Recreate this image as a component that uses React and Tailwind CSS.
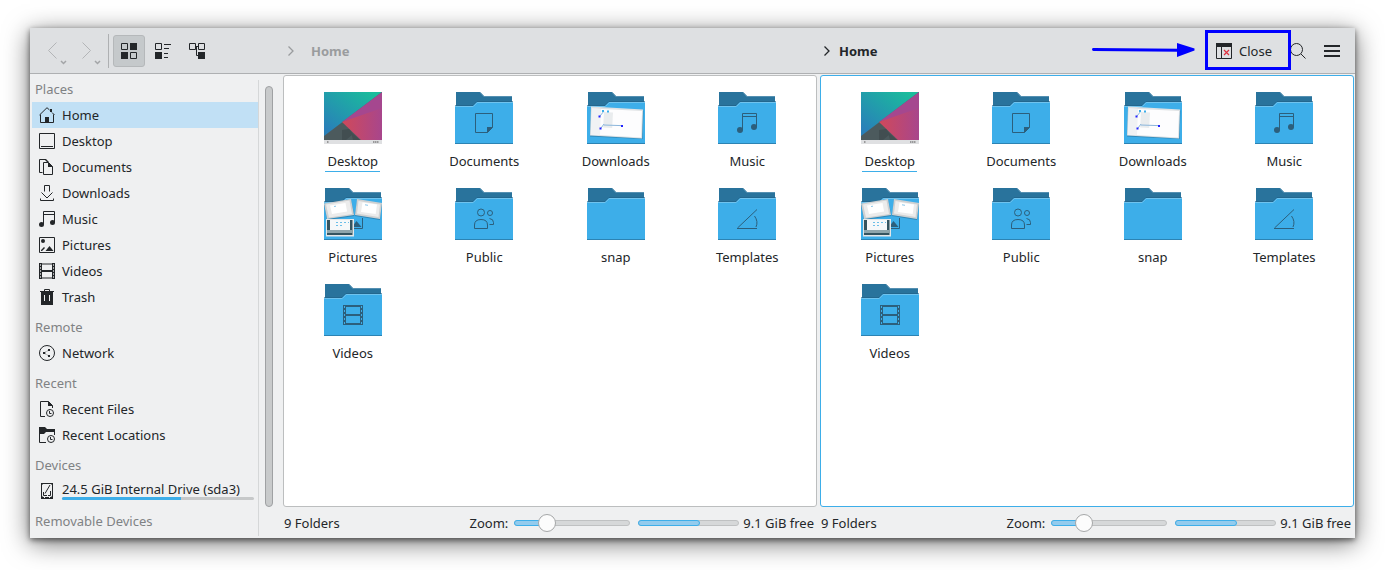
import React, { useState } from "react";

const svg16 = { width: 16, height: 16, viewBox: "0 0 16 16", fill: "none", stroke: "currentColor", "aria-hidden": true, className: "shrink-0" };

const icons = {
    home: (
        <svg {...svg16}>
            <path d="M0.5 8 8 0.7l2.5 2.3M13 5.5 15.5 8M1.5 7.5v8h13v-8" />
            <path d="M11 2h2v3h-2zM6 10h4v6H6z" fill="currentColor" stroke="none" />
        </svg>
    ),
    desktop: (
        <svg {...svg16}>
            <path d="M0.5 0.5h15v15H0.5zM2 13.5h12" />
        </svg>
    ),
    documents: (
        <svg {...svg16}>
            <path d="M3.5 13.5h-3V0.5h6M4.5 3.5h5l4 4v8h-9z" />
            <path d="M5 0h2l3 3H8zM9 3l5 5H9z" fill="currentColor" stroke="none" />
        </svg>
    ),
    downloads: (
        <svg {...svg16}>
            <path d="M5.5 6.5v-6h5v6M2.5 7.5 8 13l5.5-5.5M1.5 13.5v2h13v-2" />
        </svg>
    ),
    music: (
        <svg {...svg16}>
            <path d="M4.5 13V0.5h11V11.5M4.5 3.5h11" />
            <circle cx="2.5" cy="13.5" r="2.5" fill="currentColor" stroke="none" />
            <circle cx="13.5" cy="11.5" r="2.5" fill="currentColor" stroke="none" />
        </svg>
    ),
    pictures: (
        <svg {...svg16}>
            <path d="M0.5 0.5h15v15H0.5z" />
            <circle cx="4" cy="4" r="2" fill="currentColor" stroke="none" />
            <path d="M6.5 14l4-5 4 5zM2 14v-1l3-3 1 1-3 3z" fill="currentColor" stroke="none" />
        </svg>
    ),
    videos: (
        <svg {...svg16}>
            <path d="M0 1h16M0 15h16" strokeWidth="2" opacity="0.5" />
            <path d="M3 8h10" strokeWidth="2" />
            <path d="M0 0h3v16H0zM13 0h3v16h-3z" fill="currentColor" stroke="none" />
            <path d="M1.5 1v14M14.5 1v14" stroke="#a9abac" strokeDasharray="2 1" />
        </svg>
    ),
    trash: (
        <svg {...svg16}>
            <path d="M1 2.5h14M5.5 2V0.5h5V2" />
            <path d="M2 3h12v13H2zM5 6v6h1V6zM10 6v6h1V6z" fill="currentColor" stroke="none" fillRule="evenodd" />
        </svg>
    ),
    network: (
        <svg {...svg16}>
            <circle cx="8" cy="8" r="7.5" />
            <path d="M4 7h2v2H4zM9 4h2v2H9zM9 10h2v2H9z" fill="currentColor" stroke="none" />
            <path d="M6 7.5 9 5.5M6 8.5 9 10.5" strokeDasharray="1 1" opacity="0.7" />
        </svg>
    ),
    recentFiles: (
        <svg {...svg16}>
            <path d="M6 15.5H1.5V0.5h8l4 4V7" />
            <path d="M9 0l5 5H9z" fill="currentColor" stroke="none" />
            <circle cx="11" cy="12" r="3.5" />
            <path d="M10.5 10v2.5h2" />
        </svg>
    ),
    recentLocations: (
        <svg {...svg16}>
            <path d="M7 15.5H0.5V3M15.5 4v4" />
            <path d="M0 0h6l2 2h8v3H7L5 7H0z" fill="currentColor" stroke="none" />
            <circle cx="12" cy="12" r="3.5" />
            <path d="M11.5 10v2.5h2" />
        </svg>
    ),
    drive: (
        <svg {...svg16}>
            <path d="M2 0h12v16H2zM4 1 3 2v11l1 1h8l1-1V2l-1-1z" fill="currentColor" stroke="none" fillRule="evenodd" />
            <path d="M11 2 6 10.5M4.5 9v3.5H8M11.5 8v4.5H9" />
            <path d="M5 14.5h1M10 14.5h1" stroke="#eff0f1" />
        </svg>
    ),
};

const sections = [
    {
        title: "Places",
        items: [
            { name: "Home", icon: icons.home, active: true },
            { name: "Desktop", icon: icons.desktop },
            { name: "Documents", icon: icons.documents },
            { name: "Downloads", icon: icons.downloads },
            { name: "Music", icon: icons.music },
            { name: "Pictures", icon: icons.pictures },
            { name: "Videos", icon: icons.videos },
            { name: "Trash", icon: icons.trash },
        ],
    },
    { title: "Remote", items: [{ name: "Network", icon: icons.network }] },
    {
        title: "Recent",
        items: [
            { name: "Recent Files", icon: icons.recentFiles },
            { name: "Recent Locations", icon: icons.recentLocations },
        ],
    },
    { title: "Devices", items: [{ name: "24.5 GiB Internal Drive (sda3)", icon: icons.drive, used: 62 }] },
    { title: "Removable Devices", items: [] },
];

// drawn on top of the plain folder, in its 58x52 box
const glyphs = {
    documents: (
        <g>
            <path d="M20.5 21.5h17v14l-5 5h-12z" />
            <path d="M32 41v-6h6z" fill="#2c5f7c" stroke="none" />
        </g>
    ),
    downloads: (
        <g stroke="none">
            <path d="M4 15.5 56.5 18.5 55.5 47 3 44.5z" fill="#1f5f85" opacity="0.5" />
            <path d="M4 14.5 56 17.5 55 46.5 3 43.5z" fill="#dfe2e4" />
            <path d="M5 16.5 55 19 54 45.5 4 42.5z" fill="#fdfdfe" />
            <path d="M5 16.5 14 17l-1 26-9-.5z" fill="#f0f2f4" />
            <path d="M17 20l9 .5-.8 15.5-9-.5z" fill="#e9ecee" />
            <path d="M13 24l4-5M14 36l3-4M17 33l17 .6" stroke="#8bb6dc" />
            <path d="M15 18h2v2h-2zM20 18.5h2v2h-2z" fill="#3daee9" />
            <path d="M11.5 23.5h2v2h-2zM12.500 35.5h2v2h-2zM34 33h2v2h-2z" fill="#2222ff" />
        </g>
    ),
    music: (
        <g>
            <path d="M24.5 38V21.5h14V35M24.5 24.5h14" />
            <circle cx="22" cy="38" r="3" fill="#2c5f7c" stroke="none" />
            <circle cx="36" cy="35" r="3" fill="#2c5f7c" stroke="none" />
        </g>
    ),
    pictures: (
        <g>
            <path d="M29 40.5h9.5V30" />
            <path d="M28 39l4.5-6 5 6z" fill="#2c5f7c" stroke="none" />
            <g stroke="none">
                <path d="M0 17 27 12l3.5 16L3 32z" fill="#1f5f85" opacity="0.5" />
                <path d="M0 15.5 27 11l3 16L3 31z" fill="#cfd1d2" />
                <path d="M2 16.500l23.5-4 2.5 13.500L5 29.5z" fill="#ececec" />
                <path d="M6 17.5l15.5-2.5 1.6 8.5L8 26z" fill="#fff" />
                <path d="M33 12l25 4-2 16-25-4z" fill="#1f5f85" opacity="0.5" />
                <path d="M33 11l25 4-2 16-25-4z" fill="#cfd1d2" />
                <path d="M34.5 13 56 16.5 54.5 29 33 25.5z" fill="#ececec" />
                <path d="M38.5 14.5l14.5 2-1.3 9.5L37 24z" fill="#fff" />
                <path d="M10 18.5l2-.3M41 16.8l3 .5" stroke="#8cc8ea" />
                <path d="M2 31h28v17.5H2z" fill="#e4e7e8" />
                <path d="M3 32h25.5v15H3z" fill="#35545f" />
                <path d="M3 42h25.5v3H3z" fill="#8fa6ac" />
                <path d="M6 32h20v10H6z" fill="#f6f8f9" />
                <path d="M12 34.5h13M12 37.5h8" stroke="#6dbfe8" strokeDasharray="2 2" />
            </g>
        </g>
    ),
    public: (
        <g>
            <circle cx="26" cy="24.5" r="3.5" />
            <circle cx="35" cy="25" r="2.5" />
            <path d="M19.5 40.5V37q0-5.5 6.5-5.5T32.5 37v3.5zM34.5 30.5q4 .5 4 4v2h-4" />
        </g>
    ),
    snap: null,
    templates: (
        <g>
            <path d="M19 40.5h20M19.5 40 39 21.5M36.5 28q4 5.5 1.5 11" />
        </g>
    ),
    videos: (
        <g>
            <path d="M20.5 21v20M37.5 21v20" strokeWidth="3" />
            <path d="M20.5 22v18M37.5 22v18" stroke="#3daee9" strokeDasharray="2 2" />
            <path d="M22 22h14M22 31h14M22 40h14" strokeWidth="2" />
        </g>
    ),
};

function FolderIcon({ glyph }) {
    return (
        <svg width="58" height="52" viewBox="0 0 58 52" fill="none" stroke="#2c5f7c" aria-hidden="true">
            <path d="M1 0h24l4 4h28v12H1z" fill="#29739c" stroke="none" />
            <path d="M25.2 0.5 28.7 4.5H57" stroke="#5590b2" />
            <path d="M0 13.5h18l4-4h36" stroke="#1f5f85" opacity="0.6" />
            <path d="M0 14h18l4-4h36v42H0z" fill="#3daee9" stroke="none" />
            <path d="M0 14.5h18.3l4-4H58" stroke="#6fc3ee" />
            <path d="M0 51.5h58" stroke="#2c83b3" />
            {glyphs[glyph]}
        </svg>
    );
}

function DesktopPreview() {
    return (
        <svg width="58" height="52" viewBox="0 0 58 52" aria-hidden="true">
            <defs>
                <linearGradient id="teal" x1="0" y1="1" x2="1" y2="0">
                    <stop offset="0.1" stopColor="#2980b9" />
                    <stop offset="0.9" stopColor="#1abc9c" />
                </linearGradient>
                <linearGradient id="rose">
                    <stop offset="0" stopColor="#d0495a" />
                    <stop offset="1" stopColor="#a8468c" />
                </linearGradient>
            </defs>
            <path d="M0 0h58v52H0z" fill="#4c5a5d" />
            <path d="M0 0h58L0 44z" fill="url(#teal)" />
            <path d="M58 0v20L18 30z" fill="#a5478f" />
            <path d="M18 30 58 16v33H38z" fill="url(#rose)" />
            <path d="M18 38l7-1 4 5-7 6h-4zM27 40l9 8h-7z" fill="#424e51" />
            <path d="M0 48h58v4H0z" fill="#dfe0e2" />
            <path d="M3 50h2M49 50h6" stroke="#555" strokeDasharray="1.5 .5" />
        </svg>
    );
}

const files = [
    { name: "Desktop", icon: "desktop" },
    { name: "Documents", icon: "documents" },
    { name: "Downloads", icon: "downloads" },
    { name: "Music", icon: "music" },
    { name: "Pictures", icon: "pictures" },
    { name: "Public", icon: "public" },
    { name: "snap", icon: "snap" },
    { name: "Templates", icon: "templates" },
    { name: "Videos", icon: "videos" },
];

function Sidebar() {
    return (
        <aside className="flex w-[253px] shrink-0">
            <nav className="w-[228px] pl-0.5 pb-1">
                {sections.map((section, index) => (
                    <div key={section.title}>
                        <h2 className={`flex items-center pl-[3px] text-[#7f8284] ${index === 0 ? "h-7 pt-0.5" : "h-[30px] pt-1"}`}>
                            {section.title}
                        </h2>
                        {section.items.map((item) => (
                            <a
                                key={item.name}
                                href="#"
                                className={`flex h-[26px] items-center gap-[7px] pl-[7px] pr-1 ${item.active ? "bg-[#c1e0f5]" : ""}`}
                            >
                                {item.icon}
                                {item.used ? (
                                    <span className="flex-1 pb-0.5">
                                        <span className="block h-[17px] leading-[18px] whitespace-nowrap">{item.name}</span>
                                        <span className="block h-[3px] rounded-sm bg-[#c6c8c9]">
                                            <span className="block h-full rounded-l-sm bg-[#3daee9]" style={{ width: `${item.used}%` }} />
                                        </span>
                                    </span>
                                ) : (
                                    <span>{item.name}</span>
                                )}
                            </a>
                        ))}
                    </div>
                ))}
            </nav>
            <div className="mt-1.5 mb-0.5 w-px bg-[#d5d7d8]" />
            {/* Scrollbar */}
            <div className="ml-1.5 mt-3 mb-[31px] w-2 rounded-full border border-[#9fa1a3] bg-[#c8cacb]" />
        </aside>
    );
}

function Pane({ id, focused }) {
    const [zoom, setZoom] = useState(24);

    return (
        <section className="flex min-w-0 flex-1 flex-col">
            <div className={`flex-1 rounded-[3px] border bg-white px-[3px] pt-4 ${focused ? "border-[#3daee9]" : "border-[#bcbebf]"}`}>
                <div className="grid grid-cols-4">
                    {files.map((file) => (
                        <div key={file.name} className="flex h-24 flex-col items-center gap-2">
                            {file.icon === "desktop" ? <DesktopPreview /> : <FolderIcon glyph={file.icon} />}
                            <span className={`h-5 px-0.5 ${file.icon === "desktop" ? "border-b border-[#3daee9]" : ""}`}>{file.name}</span>
                        </div>
                    ))}
                </div>
            </div>

            {/* Status bar */}
            <div className="flex h-[31px] items-center pl-px pr-[3px]">
                <span className="flex-1">9 Folders</span>
                <label htmlFor={`zoom-${id}`}>Zoom:</label>
                <div className="relative ml-1.5 h-1.5 w-[116px] rounded-full border border-[#bfc1c2] bg-[#d6d8d9]">
                    <div className="absolute -left-px -top-px h-1.5 rounded-full border border-[#3daee9] bg-[#93cbed]" style={{ width: `${zoom + 6}%` }} />
                    <input
                        id={`zoom-${id}`}
                        type="range"
                        value={zoom}
                        onChange={(e) => setZoom(Number(e.target.value))}
                        className="absolute -left-px -top-[7px] h-[18px] w-[116px] appearance-none bg-transparent [&::-webkit-slider-thumb]:size-[18px] [&::-webkit-slider-thumb]:appearance-none [&::-webkit-slider-thumb]:rounded-full [&::-webkit-slider-thumb]:border [&::-webkit-slider-thumb]:border-[#a5a7a8] [&::-webkit-slider-thumb]:bg-[#fcfcfc]"
                    />
                </div>
                <div
                    role="progressbar"
                    aria-label="Used space"
                    aria-valuenow={62}
                    className="ml-2 mr-1 h-1.5 w-[101px] rounded-full border border-[#bfc1c2] bg-[#d6d8d9]"
                >
                    <div className="-ml-px -mt-px h-1.5 w-[62px] rounded-full border border-[#3daee9] bg-[#93cbed]" />
                </div>
                <span>9.1 GiB free</span>
            </div>
        </section>
    );
}

function NavButton({ label, path }) {
    return (
        <button aria-label={label} className="flex h-8 w-[34px] items-center text-[#b3b5b7]">
            <svg width="28" height="32" viewBox="0 0 28 32" fill="none" stroke="currentColor" aria-hidden="true">
                <path d={path} />
                <path d="M21 26l2.5 2.5L26 26" strokeWidth="1.5" stroke="#a3a5a7" />
            </svg>
        </button>
    );
}

function Breadcrumb({ active }) {
    return (
        <div className={`flex items-center pl-[5px] font-bold ${active ? "gap-[9px] text-[#232629]" : "gap-[17px] text-[#9a9c9e]"}`}>
            <svg width="6" height="10" viewBox="0 0 6 10" fill="none" stroke="currentColor" strokeWidth="1.3" aria-hidden="true">
                <path d="M0.5 0.5 5 5 0.5 9.5" />
            </svg>
            <span>Home</span>
        </div>
    );
}

function Toolbar() {
    return (
        <header className="flex h-[46px] border-b border-[#aeb0b2] bg-[#dee0e2]">
            <div className="flex w-[253px] shrink-0 items-center pl-2.5">
                <NavButton label="Back" path="M16.5 7.5 8.5 15.5 16.5 23.5" />
                <NavButton label="Forward" path="M8.5 7.5l8 8-8 8" />
                <div className="h-[34px] w-px bg-[#aeb0b2]" />
                <button aria-label="Icons" className="ml-1 mr-px flex size-8 items-center justify-center rounded-[3px] border border-[#b5b8ba] bg-[#c5c9cb]">
                    <svg {...svg16}>
                        <path d="M0.5 0.5h6v6h-6zM9.5 9.5h6v6h-6z" />
                        <path d="M9 0h7v7H9zM0 9h7v7H0z" fill="currentColor" stroke="none" />
                    </svg>
                </button>
                <button aria-label="Compact" className="flex h-8 w-[34px] items-center justify-center">
                    <svg {...svg16}>
                        <path d="M0.5 0.5h6v6h-6zM9 1.5h7M9 5.5h5M9 10.5h4M9 14.5h4" />
                        <path d="M0 9h7v7H0z" fill="currentColor" stroke="none" />
                    </svg>
                </button>
                <button aria-label="Details" className="flex h-8 w-[34px] items-center justify-center">
                    <svg {...svg16}>
                        <path d="M0.5 0.5h6v6h-6zM9.5 0.5h6v6h-6zM7 3.5h2.5M7.5 4v8.5H10" />
                        <path d="M9 9h7v7H9z" fill="currentColor" stroke="none" />
                    </svg>
                </button>
            </div>
            <div className="flex flex-1">
                <Breadcrumb />
            </div>
            <div className="flex flex-1 items-center justify-between">
                <Breadcrumb active />
                <div className="flex items-center pr-[15px]">
                    <button className="relative flex h-8 items-center gap-[7px]">
                        <svg {...svg16}>
                            <path d="M0.5 0.5h15v15H0.5zM5.5 2v13" />
                            <path d="M0 0h16v4H0z" fill="currentColor" stroke="none" />
                            <path d="M8 7l5 5M13 7l-5 5" stroke="#e0303f" strokeWidth="1.2" />
                        </svg>
                        Close
                        {/* Callout */}
                        <span className="pointer-events-none absolute -left-[11px] -right-[19px] -top-[5px] h-10 border-[3px] border-[#0000ff]" />
                        <svg width="104" height="16" viewBox="0 0 104 16" className="pointer-events-none absolute right-full top-[7px] mr-5" aria-hidden="true">
                            <path d="M1.5 7.5 88 8.2" stroke="#00f" strokeWidth="3" strokeLinecap="round" />
                            <path d="M85 1 102.5 6.5v2L85 15z" fill="#00f" />
                        </svg>
                    </button>
                    <button aria-label="Search" className="ml-[18px]">
                        <svg {...svg16}>
                            <circle cx="6.5" cy="6.5" r="6" />
                            <path d="M11 11l4.5 4.5" />
                        </svg>
                    </button>
                    <button aria-label="Menu" className="ml-[18px]">
                        <svg {...svg16} strokeWidth="2">
                            <path d="M0 3h16M0 8h16M0 13h16" />
                        </svg>
                    </button>
                </div>
            </div>
        </header>
    );
}

export default function App() {
    return (
        <div className="bg-white px-[30px] pt-7 pb-8 font-['Noto_Sans',sans-serif] text-[13px] leading-[18px] text-[#232629]">
            <div className="bg-[#eff0f1] shadow-[0_5px_24px_rgba(0,0,0,0.55),0_2px_6px_rgba(0,0,0,0.55)]">
                <Toolbar />
                <div className="flex">
                    <Sidebar />
                    <main className="flex min-w-0 flex-1 gap-[3px] pt-px pr-px">
                        <Pane id="left" />
                        <Pane id="right" focused />
                    </main>
                </div>
            </div>
        </div>
    );
}
